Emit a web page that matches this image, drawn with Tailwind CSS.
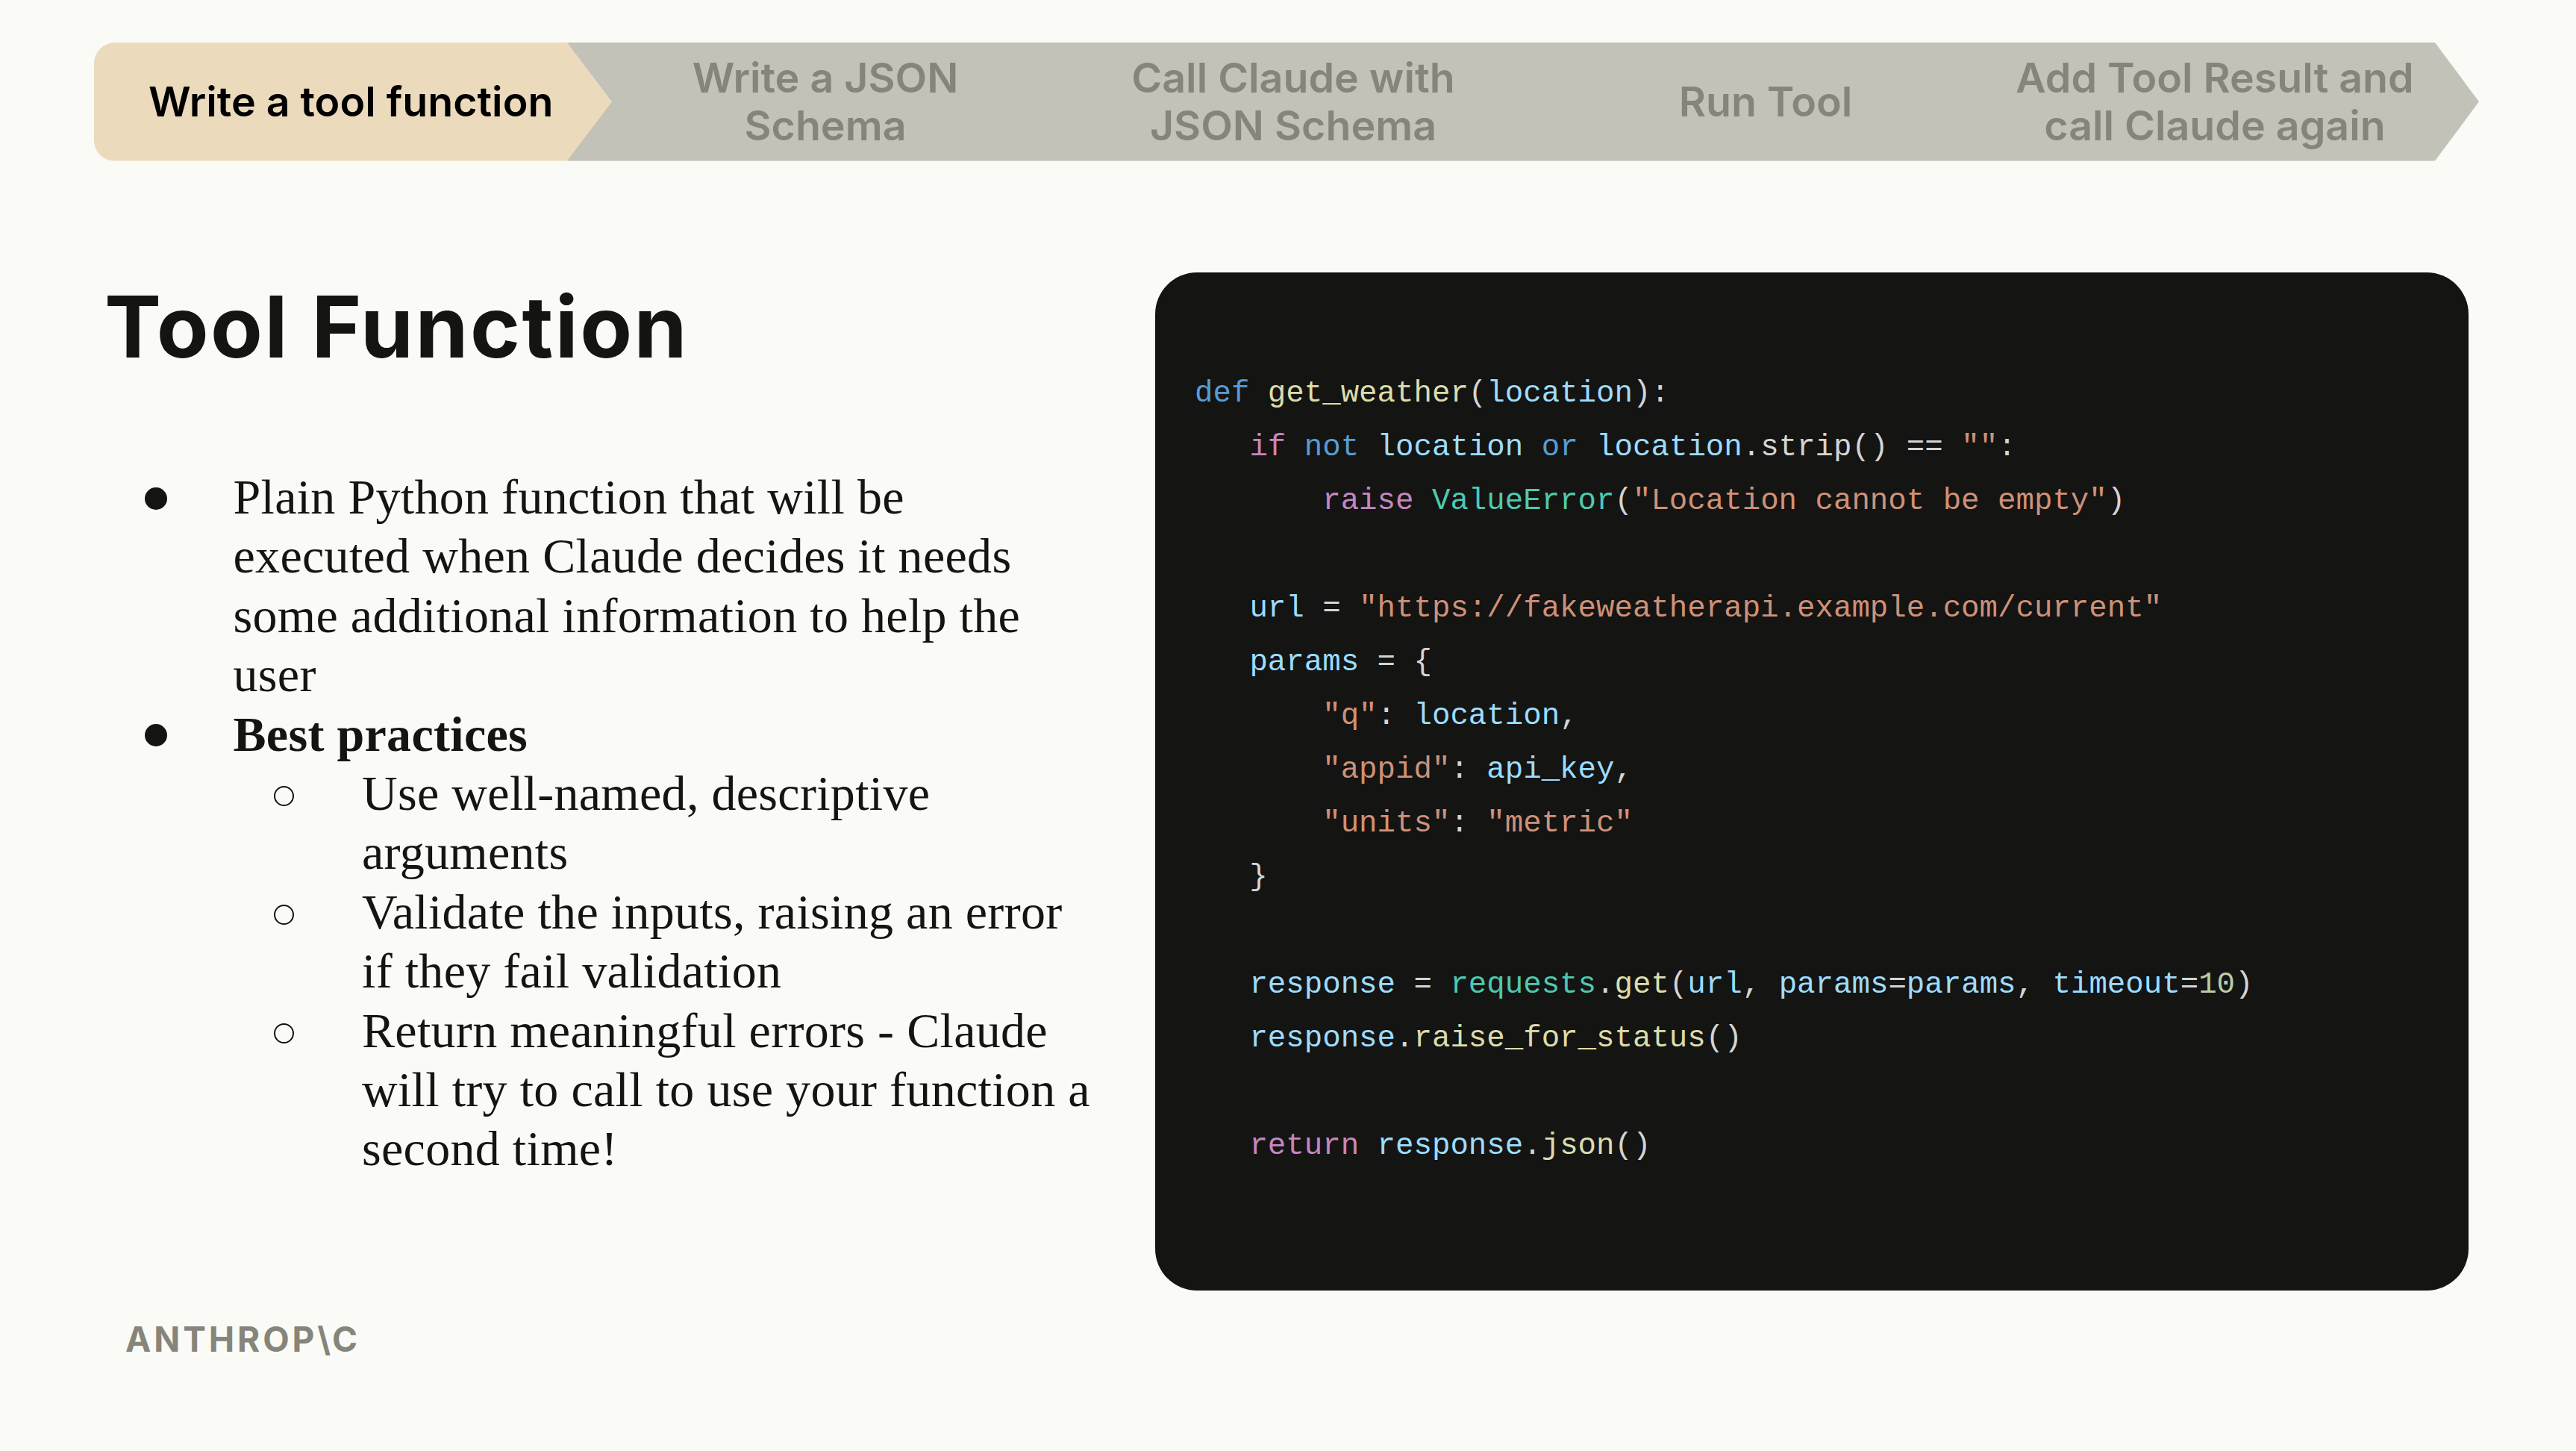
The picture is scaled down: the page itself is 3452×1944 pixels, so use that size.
<!DOCTYPE html>
<html lang="en">
<head>
  <meta charset="UTF-8" />
  <title>Tool Function</title>
  <script src="https://cdn.jsdelivr.net/npm/@tailwindcss/browser@4"></script>
</head>
<body class="w-[3452px] h-[1944px] overflow-hidden bg-[#fafaf7] text-[#141413] font-['Liberation_Serif',serif]">
  <!-- step bar -->
  <div class="flex ml-[126px] mt-[57px] h-[158.5px] font-['Inter',sans-serif] font-semibold text-[55.5px] leading-[64px] text-center">
    <div class="relative z-10 w-[694px] shrink-0 flex items-center pl-[73px] rounded-l-[28px] bg-[#ebdbbc] text-black whitespace-nowrap [clip-path:polygon(0_0,calc(100%-60px)_0,100%_50%,calc(100%-60px)_100%,0_100%)]">Write a tool function</div>
    <div class="flex items-center ml-[-60px] w-[2562px] pl-[60px] bg-[#c2c2b8] text-[#85857b] [clip-path:polygon(0_0,calc(100%-59px)_0,100%_50%,calc(100%-59px)_100%,0_100%)]">
      <div class="w-[572px]">Write a JSON<br>Schema</div>
      <div class="w-[682px]">Call Claude with<br>JSON Schema</div>
      <div class="w-[584px]">Run Tool</div>
      <div class="w-[620px]">Add Tool Result and<br>call Claude again</div>
    </div>
  </div>

  <div class="flex mt-[149.5px] pl-[143px]">
    <!-- left column -->
    <div class="w-[1405px] shrink-0">
      <h1 class="-ml-[3px] font-['Inter',sans-serif] font-bold text-[114px] tracking-[2.5px] leading-[146px]">Tool Function</h1>
      <ul class="mt-[115px] text-[66px] leading-[79.4px] tracking-[0.3px]">
        <li class="flex">
          <span class="w-[169.5px] pl-[51px] pt-[4px] shrink-0 flex items-center h-[79.4px]"><span class="size-[30px] rounded-full bg-[#141413]"></span></span>
          <span>Plain Python function that will be<br>executed when Claude decides it needs<br>some additional information to help the<br>user</span>
        </li>
        <li class="flex font-bold">
          <span class="w-[169.5px] pl-[51px] pt-[4px] shrink-0 flex items-center h-[79.4px]"><span class="size-[30px] rounded-full bg-[#141413]"></span></span>
          <span>Best practices</span>
        </li>
        <li class="flex pl-[169.5px]">
          <span class="w-[172.5px] pl-[54px] pt-[8px] shrink-0 flex items-center h-[79.4px]"><span class="size-[27px] rounded-full border-[2.5px] border-[#141413]"></span></span>
          <span>Use well-named, descriptive<br>arguments</span>
        </li>
        <li class="flex pl-[169.5px]">
          <span class="w-[172.5px] pl-[54px] pt-[8px] shrink-0 flex items-center h-[79.4px]"><span class="size-[27px] rounded-full border-[2.5px] border-[#141413]"></span></span>
          <span>Validate the inputs, raising an error<br>if they fail validation</span>
        </li>
        <li class="flex pl-[169.5px]">
          <span class="w-[172.5px] pl-[54px] pt-[8px] shrink-0 flex items-center h-[79.4px]"><span class="size-[27px] rounded-full border-[2.5px] border-[#141413]"></span></span>
          <span>Return meaningful errors - Claude<br>will try to call to use your function a<br>second time!</span>
        </li>
      </ul>
    </div>

    <!-- code card -->
    <div class="w-[1760px] h-[1364px] shrink-0 rounded-[56px] bg-[#141413] pl-[53px] pt-[125.5px]">
<pre class="font-['Liberation_Mono',monospace] text-[40.75px] leading-[72px] text-[#d4d4d4]"><span class="text-[#569cd6]">def</span> <span class="text-[#dcdcaa]">get_weather</span>(<span class="text-[#9cdcfe]">location</span>):
   <span class="text-[#c586c0]">if</span> <span class="text-[#569cd6]">not</span> <span class="text-[#9cdcfe]">location</span> <span class="text-[#569cd6]">or</span> <span class="text-[#9cdcfe]">location</span>.strip() == <span class="text-[#ce9178]">""</span>:
       <span class="text-[#c586c0]">raise</span> <span class="text-[#4ec9b0]">ValueError</span>(<span class="text-[#ce9178]">"Location cannot be empty"</span>)

   <span class="text-[#9cdcfe]">url</span> = <span class="text-[#ce9178]">"https://fakeweatherapi.example.com/current"</span>
   <span class="text-[#9cdcfe]">params</span> = {
       <span class="text-[#ce9178]">"q"</span>: <span class="text-[#9cdcfe]">location</span>,
       <span class="text-[#ce9178]">"appid"</span>: <span class="text-[#9cdcfe]">api_key</span>,
       <span class="text-[#ce9178]">"units"</span>: <span class="text-[#ce9178]">"metric"</span>
   }

   <span class="text-[#9cdcfe]">response</span> = <span class="text-[#4ec9b0]">requests</span>.<span class="text-[#dcdcaa]">get</span>(<span class="text-[#9cdcfe]">url</span>, <span class="text-[#9cdcfe]">params</span>=<span class="text-[#9cdcfe]">params</span>, <span class="text-[#9cdcfe]">timeout</span>=<span class="text-[#b5cea8]">10</span>)
   <span class="text-[#9cdcfe]">response</span>.<span class="text-[#dcdcaa]">raise_for_status</span>()

   <span class="text-[#c586c0]">return</span> <span class="text-[#9cdcfe]">response</span>.<span class="text-[#dcdcaa]">json</span>()</pre>
    </div>
  </div>

  <!-- logo -->
  <div class="ml-[168px] mt-[42px] font-['Inter',sans-serif] font-bold text-[46px] leading-[46px] tracking-[3.9px] text-[#85857b]">ANTHROP\C</div>
</body>
</html>
